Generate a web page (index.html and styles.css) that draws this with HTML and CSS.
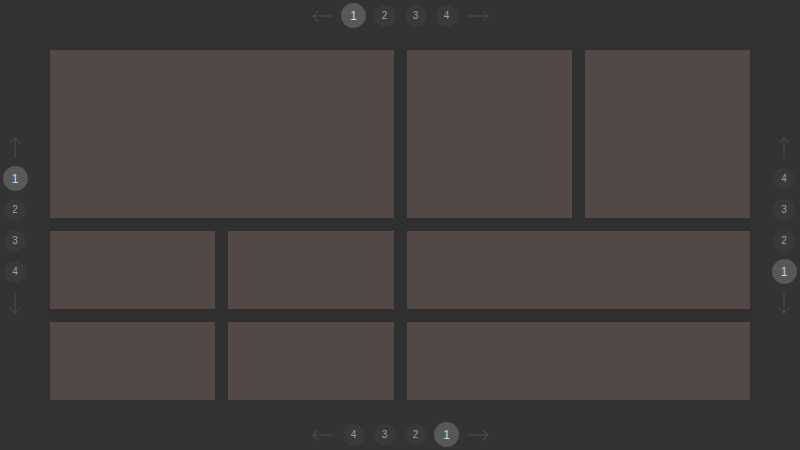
FILE: index.html
```html
<!DOCTYPE html>
<html>
<head>
<meta charset="utf-8">
<link rel="stylesheet" href="styles.css">
</head>
<body>
<div class="page">
  <nav class="nav nav-top">
    <span class="arrow"><svg width="22" height="12" viewBox="0 0 22 12"><path d="M21 6H1M6 1L1 6l5 5"/></svg></span>
    <span class="dot active">1</span>
    <span class="dot">2</span>
    <span class="dot">3</span>
    <span class="dot">4</span>
    <span class="arrow"><svg width="22" height="12" viewBox="0 0 22 12"><path d="M1 6h20M16 1l5 5-5 5"/></svg></span>
  </nav>
  <nav class="nav nav-left">
    <span class="arrow"><svg width="12" height="22" viewBox="0 0 12 22"><path d="M6 21V1M1 6l5-5 5 5"/></svg></span>
    <span class="dot active">1</span>
    <span class="dot">2</span>
    <span class="dot">3</span>
    <span class="dot">4</span>
    <span class="arrow"><svg width="12" height="22" viewBox="0 0 12 22"><path d="M6 1v20M1 16l5 5 5-5"/></svg></span>
  </nav>
  <main class="grid">
    <div class="tile t-big"></div>
    <div class="tile"></div>
    <div class="tile"></div>
    <div class="tile"></div>
    <div class="tile"></div>
    <div class="tile t-wide"></div>
    <div class="tile"></div>
    <div class="tile"></div>
    <div class="tile t-wide"></div>
  </main>
  <nav class="nav nav-right">
    <span class="arrow"><svg width="12" height="22" viewBox="0 0 12 22"><path d="M6 21V1M1 6l5-5 5 5"/></svg></span>
    <span class="dot">4</span>
    <span class="dot">3</span>
    <span class="dot">2</span>
    <span class="dot active">1</span>
    <span class="arrow"><svg width="12" height="22" viewBox="0 0 12 22"><path d="M6 1v20M1 16l5 5 5-5"/></svg></span>
  </nav>
  <nav class="nav nav-bottom">
    <span class="arrow"><svg width="22" height="12" viewBox="0 0 22 12"><path d="M21 6H1M6 1L1 6l5 5"/></svg></span>
    <span class="dot">4</span>
    <span class="dot">3</span>
    <span class="dot">2</span>
    <span class="dot active">1</span>
    <span class="arrow"><svg width="22" height="12" viewBox="0 0 22 12"><path d="M1 6h20M16 1l5 5-5 5"/></svg></span>
  </nav>
</div>
</body>
</html>
```
FILE: styles.css
```css
html, body {
  margin: 0;
  padding: 0;
  background: #333333;
}
.page {
  width: 800px;
  height: 450px;
  display: grid;
  grid-template-columns: 30px 20px 700px 20px 28px;
  grid-template-rows: 31px 19px 350px 19px 31px;
  font-family: "Liberation Sans", Arial, sans-serif;
}
.nav {
  display: flex;
  align-items: center;
  justify-content: center;
  gap: 7px;
}
.nav-top { grid-column: 3; grid-row: 1; }
.nav-bottom { grid-column: 3; grid-row: 5; }
.nav-left { grid-column: 1; grid-row: 3; flex-direction: column; }
.nav-right { grid-column: 5; grid-row: 3; flex-direction: column; }
.arrow {
  width: 24px;
  height: 24px;
  display: flex;
  align-items: center;
  justify-content: center;
}
.arrow svg path {
  fill: none;
  stroke: #464646;
  stroke-width: 1.4;
}
.dot {
  width: 24px;
  height: 24px;
  display: flex;
  align-items: center;
  justify-content: center;
  font-size: 10px;
  color: #9e9e9e;
  position: relative;
  isolation: isolate;
}
.dot::before {
  content: "";
  position: absolute;
  width: 22px;
  height: 22px;
  border-radius: 50%;
  background: #393939;
  z-index: -1;
}
.dot.active {
  font-size: 12px;
  color: #d4d4d4;
}
.dot.active::before {
  width: 25px;
  height: 25px;
  background: #595858;
}
.grid {
  grid-column: 3;
  grid-row: 3;
  display: grid;
  grid-template-columns: repeat(4, 1fr);
  grid-template-rows: 168px 78px 78px;
  gap: 13px;
  background: #2f302f;
  box-shadow: 0 0 0 2px #303130;
}
.tile {
  background: #524947;
}
.t-big { grid-column: span 2; }
.t-wide { grid-column: span 2; }
```
